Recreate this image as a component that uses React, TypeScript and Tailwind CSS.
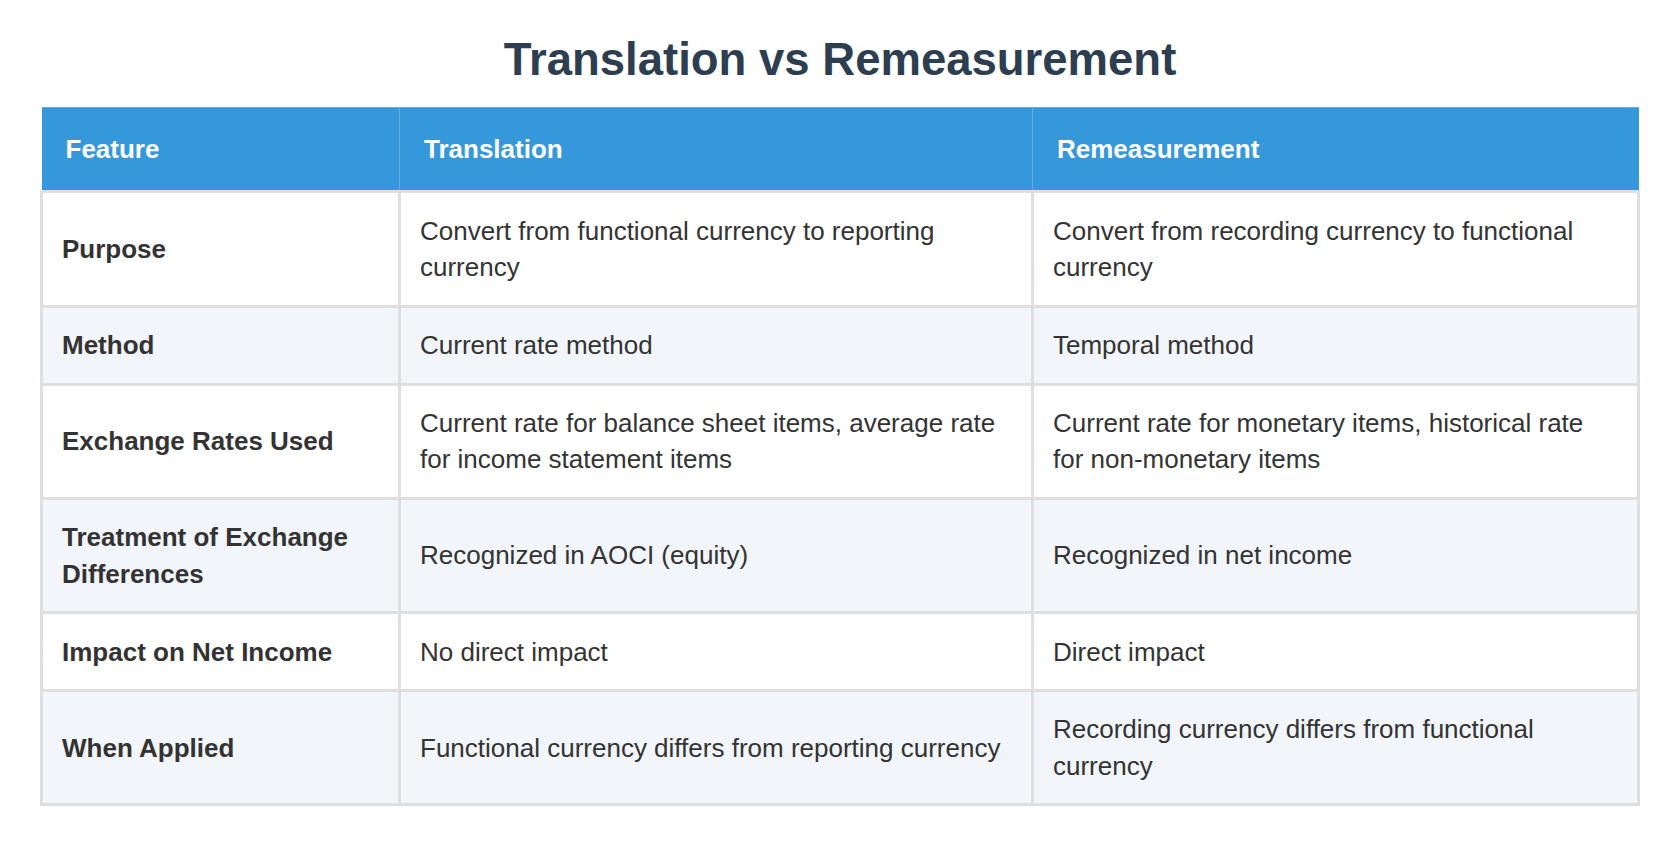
import React from "react";

const rows = [
  {
    feature: "Purpose",
    translation: "Convert from functional currency to reporting currency",
    remeasurement: "Convert from recording currency to functional currency",
  },
  { feature: "Method", translation: "Current rate method", remeasurement: "Temporal method" },
  {
    feature: "Exchange Rates Used",
    translation: "Current rate for balance sheet items, average rate for income statement items",
    remeasurement: "Current rate for monetary items, historical rate for non-monetary items",
  },
  {
    feature: "Treatment of Exchange Differences",
    translation: "Recognized in AOCI (equity)",
    remeasurement: "Recognized in net income",
  },
  { feature: "Impact on Net Income", translation: "No direct impact", remeasurement: "Direct impact" },
  {
    feature: "When Applied",
    translation: "Functional currency differs from reporting currency",
    remeasurement: "Recording currency differs from functional currency",
  },
];

export default function App() {
  return (
    <div className="min-h-screen w-full bg-white px-[40px] pt-[33px] font-['Liberation_Sans',Arial,sans-serif] text-[#333]">
      <h1 className="mb-[20px] text-center text-[45.5px] font-bold leading-[54px] text-[#2c3e50]">
        Translation vs Remeasurement
      </h1>
      <table className="w-full table-fixed border-collapse text-[26px] leading-[36.4px]">
        <colgroup>
          <col className="w-[358px]" />
          <col className="w-[633px]" />
          <col />
        </colgroup>
        <thead>
          <tr className="bg-[#3498db] text-white">
            <th className="border-t border-[#5dade2] px-[24px] py-[23px] text-left font-bold">Feature</th>
            <th className="border-t border-l border-[#5dade2] px-[24px] py-[23px] text-left font-bold">Translation</th>
            <th className="border-t border-l border-[#5dade2] px-[24px] py-[23px] text-left font-bold">Remeasurement</th>
          </tr>
        </thead>
        <tbody>
          {rows.map((r, i) => (
            <tr key={r.feature} className={i % 2 === 0 ? "bg-white" : "bg-[#f2f5fa]"}>
              <td className="border-[3px] border-[#dfdfdf] px-[19px] py-[19.25px] align-middle font-bold">{r.feature}</td>
              <td className="border-[3px] border-[#dfdfdf] px-[19px] py-[19.25px] align-middle">{r.translation}</td>
              <td className="border-[3px] border-[#dfdfdf] px-[19px] py-[19.25px] align-middle">{r.remeasurement}</td>
            </tr>
          ))}
        </tbody>
      </table>
    </div>
  );
}
